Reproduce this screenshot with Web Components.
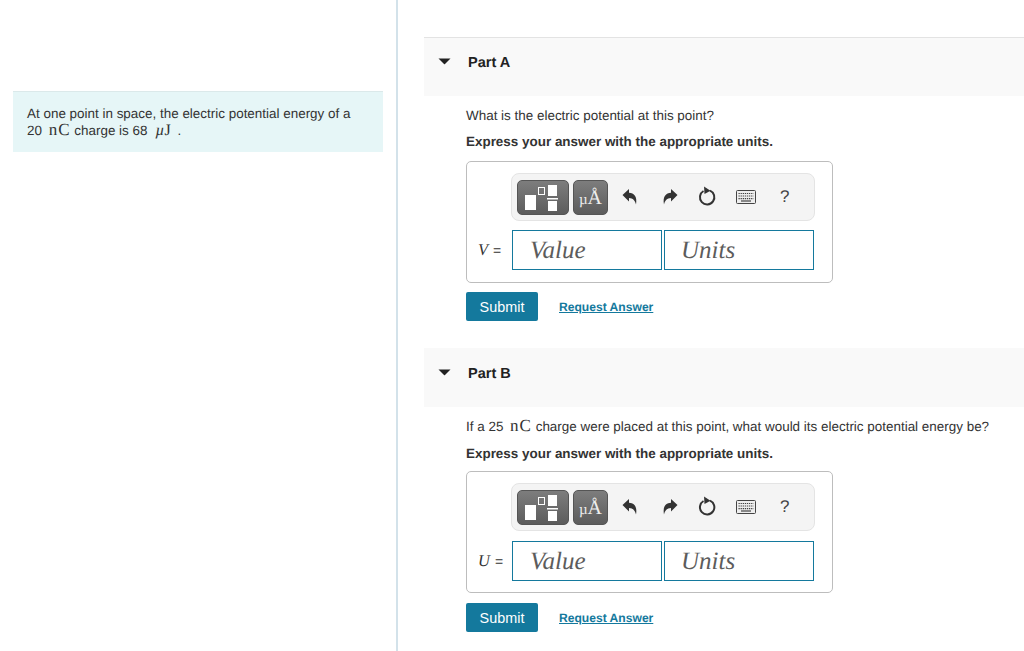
<!DOCTYPE html>
<html><head><meta charset="utf-8"><title>Part A and B</title>
<style>
html,body{margin:0;padding:0;background:#fff;height:100%;overflow:hidden}
body{font-family:"Liberation Sans",Arial,sans-serif;font-size:13.45px;color:#333;text-rendering:geometricPrecision}
.m{font-family:'Liberation Serif',serif;font-size:17px;letter-spacing:1px;margin:0 0 0 3px}
.u{font-family:'Liberation Serif',serif;font-size:16px;margin:0 3px 0 4px}
</style></head><body>
<template id="t-page"><style>
:host{display:grid;grid-template-columns:396px 2px 1fr;height:651px;overflow:hidden}
.left{padding:91px 13px 0 13px;box-sizing:border-box;width:396px}
.rule{background:#d3e2ea;width:2px}
.right{padding:37px 0 0 26px;min-width:0}
</style><div class="left"><slot name="left"></slot></div><div class="rule"></div><div class="right"><slot></slot></div></template>

<template id="t-note"><style>
:host{display:block;background:#e6f6f7;border-top:1px solid #dbe9ea;height:61px;box-sizing:border-box;width:370px;padding:14px 14px 0 14px;font-size:13.45px;line-height:16px;color:#333}
</style><slot></slot></template>

<template id="t-part"><style>
:host{display:block;height:311px}
header{display:flex;height:59px;background:#f9f9f9;box-sizing:border-box;padding:17px 0 0 14px;font-weight:bold;font-size:14.5px;line-height:18px;color:#222}
:host([first]) header{border-top:1px solid #e3e3e3;padding-top:16px}
svg{width:13px;height:18px;margin-right:17px;display:block}
.body{padding:11px 0 0 42px}
:host([first]) .body{padding-top:12px}
.q{line-height:16px;height:16px;white-space:nowrap}
.ex{font-weight:bold;line-height:16px;margin-top:12px}
:host([first]) .ex{margin-top:10px}
::slotted(answer-box){margin-top:9px}
:host([first]) ::slotted(answer-box){margin-top:11px}
.act{display:flex;align-items:center;margin-top:10px;gap:21px}
:host([first]) .act{margin-top:9px}
button{width:72px;height:29px;border:0;border-radius:2px;background:#14799d;color:#fff;font:14.4px "Liberation Sans",Arial,sans-serif;padding:0}
a{color:#14799d;font-weight:bold;font-size:12.1px;text-decoration:underline}
</style><header><svg viewBox="0 0 13 18"><path d="M.5 4.500h12L7 10q-.5.500-1 0z" fill="#222"/></svg><span><slot name="title"></slot></span></header>
<div class="body"><div class="q"><slot name="q"></slot></div><div class="ex">Express your answer with the appropriate units.</div>
<slot name="box"></slot>
<div class="act"><button>Submit</button><a href="#">Request Answer</a></div></div></template>

<template id="t-box"><style>
:host{display:block;width:367px;height:122px;box-sizing:border-box;border:1px solid #bdbdbd;border-radius:5px;padding:11px 17px 0 11px}
.row{display:flex;align-items:center;margin-top:9px;height:40px}
:host([low]) .row{margin-top:10px}
.lab{width:34px;flex:none;font:italic 16.5px "Liberation Serif",serif;color:#333;white-space:nowrap;text-align:left}
.lab span{font:14px "Liberation Sans",Arial,sans-serif;margin-left:5px}
.f{width:150px;height:40px;box-sizing:border-box;border:1px solid #14799d;font:italic 25px "Liberation Serif",serif;color:#5c5c5c;padding:4px 0 0 17px;line-height:32px;flex:none}
.f+.f{margin-left:2px;padding-left:16px}
math-toolbar{margin-left:33px}
</style><math-toolbar></math-toolbar>
<div class="row"><div class="lab"><slot></slot><span>=</span></div><div class="f">Value</div><div class="f">Units</div></div></template>

<template id="t-bar"><style>
:host{display:flex;width:304px;height:48px;box-sizing:border-box;background:#f4f4f4;border:1px solid #e4e4e4;border-radius:8px;position:relative;align-items:center;padding-left:5px}
.b{height:35px;box-sizing:border-box;border:1px solid #555;border-radius:5px;background:linear-gradient(#7d7d7d,#5c5c5c);flex:none}
.b1{width:52px}.b2{width:35px;margin-left:4px;color:#eee;font:20px/35px "Liberation Serif",serif;text-align:center;white-space:nowrap;overflow:hidden}
.b svg{display:block}
.i{flex:none;display:block}
.q{flex:none;font-size:17px;color:#444;line-height:20px}
</style>
<div class="b b1"><svg width="50" height="33" viewBox="0 0 50 33"><rect x="7" y="14" width="11" height="15" fill="#fff"/><rect x="20.500" y="6.500" width="6" height="7" fill="none" stroke="#fff"/><rect x="30" y="4" width="9" height="11" fill="#fff"/><rect x="29" y="17" width="11" height="1.500" fill="#fff"/><rect x="30" y="20" width="9" height="10" fill="#fff"/></svg></div>
<div class="b b2"><span style="font-size:15px">µ</span>Å</div>
<svg class="i" style="margin-left:14px" width="16" height="18" viewBox="0 0 16 18"><path d="M.5 7 7 1V4.800C12 5 15.500 8.500 14 16.500 13 12.500 11 10.200 7 10V13.500z" fill="#333"/></svg>
<svg class="i" style="margin-left:24px" width="16" height="18" viewBox="0 0 16 18"><path d="M15.500 7 9 1V4.800C4 5 .5 8.500 2 16.500 3 12.500 5 10.200 9 10V13.500z" fill="#333"/></svg>
<svg class="i" style="margin-left:19px" width="20" height="22" viewBox="0 0 20 22"><path d="M6.500 5A7.200 7.200 0 1 0 13 4.600" fill="none" stroke="#333" stroke-width="2"/><path d="M7 .5 13.500 4.800 7.500 8z" fill="#333"/></svg>
<svg class="i" style="margin-left:19px" width="20" height="14" viewBox="0 0 20 14"><rect x=".5" y=".5" width="19" height="13" rx="1" fill="#eee" stroke="#444"/><path d="M2.500 3.500h15M2.500 6h15" stroke="#444" stroke-width="1.200" stroke-dasharray="1.300 .8"/><path d="M2.500 8.700h15" stroke="#444" stroke-width="1.200" stroke-dasharray="1.300 .8"/><path d="M5 11h10" stroke="#444" stroke-width="1.200"/></svg>
<span class="q" style="margin-left:24px">?</span></template>

<app-page>
<note-panel slot="left">At one point in space, the electric potential energy of a<br>20 <span class="m">nC</span> charge is 68 <span class="u"><i>µ</i>J</span> .</note-panel>
<part-section first>
<span slot="title">Part A</span>
<span slot="q">What is the electric potential at this point?</span>
<answer-box slot="box">V</answer-box>
</part-section>
<part-section>
<span slot="title">Part B</span>
<span slot="q">If a 25 <span class="m">nC</span> charge were placed at this point, what would its electric potential energy be?</span>
<answer-box slot="box" low>U</answer-box>
</part-section>
</app-page>
<script>
const def=(n,t)=>customElements.define(n,class extends HTMLElement{constructor(){super();this.attachShadow({mode:"open"}).appendChild(document.getElementById(t).content.cloneNode(true))}});
def("math-toolbar","t-bar");def("answer-box","t-box");def("part-section","t-part");def("note-panel","t-note");def("app-page","t-page");
</script>
</body></html>
